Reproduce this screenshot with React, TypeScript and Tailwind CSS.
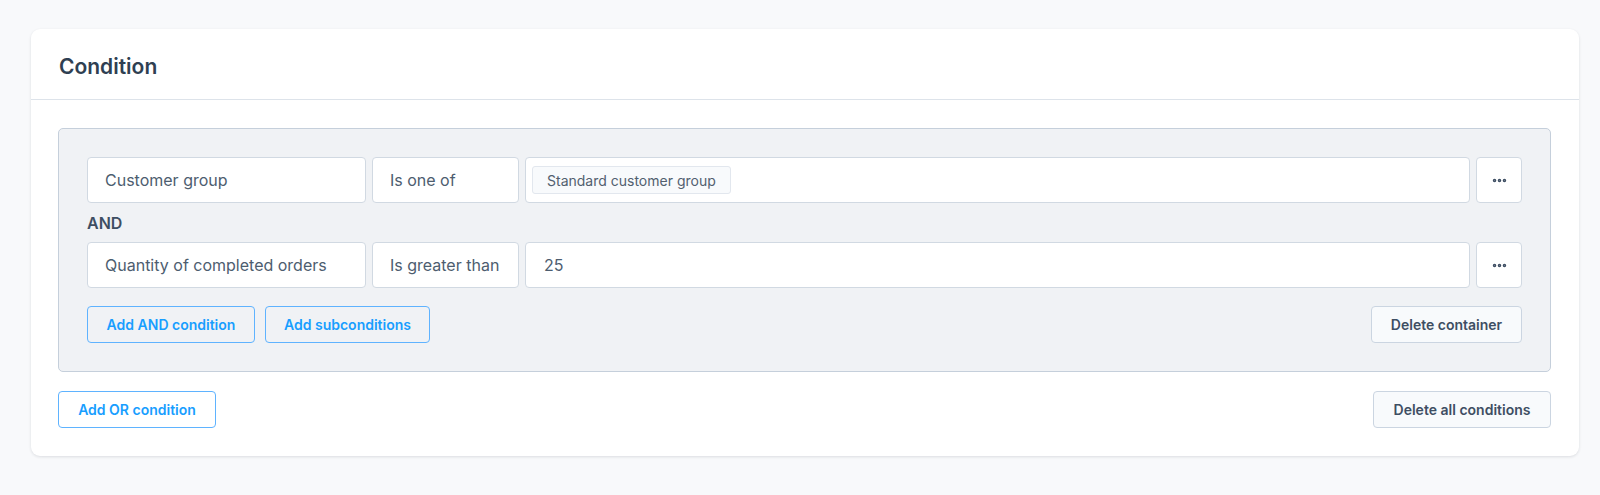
import { MoreHorizontal } from 'lucide-react'

const font = { fontFamily: 'Inter, "Noto Sans", sans-serif' }

function Field({ children, className = '' }: { children: React.ReactNode; className?: string }) {
  return (
    <div className={`h-[46px] bg-white border border-[#d1d9e2] rounded-[4px] flex items-center px-[17px] text-[16px] text-[#4d5d6f] ${className}`}>
      {children}
    </div>
  )
}

function Row({ field, op, children }: { field: string; op: string; children: React.ReactNode }) {
  return (
    <div className="flex gap-[6px]">
      <Field className="w-[279px] shrink-0">{field}</Field>
      <Field className="w-[147px] shrink-0">{op}</Field>
      <Field className="flex-1 !px-[6px]">{children}</Field>
      <button className="w-[46px] h-[46px] shrink-0 bg-white border border-[#d1d9e2] rounded-[4px] flex items-center justify-center text-[#3e4e63]">
        <MoreHorizontal size={17} strokeWidth={3} />
      </button>
    </div>
  )
}

export default function App() {
  return (
    <div className="h-[495px] overflow-hidden bg-[#f8f9fb] pt-[29px] pl-[31px]" style={font}>
      <div className="w-[1548px] bg-white rounded-[9px] shadow-[0_1px_3px_rgba(15,23,42,0.12)]">
        <div className="h-[71px] flex items-center px-[28px] pt-[5px] border-b border-[#dde3ea]">
          <h2 className="text-[21px] font-semibold text-[#2f3f52]">Condition</h2>
        </div>
        <div className="pl-[27px] pr-[28px] pt-[28px] pb-[28px]">
          <div className="bg-[#f0f2f5] border border-[#c5cfdb] rounded-[5px] p-[28px]">
            <Row field="Customer group" op="Is one of">
              <span className="h-[28px] px-[14px] flex items-center bg-[#f8fafc] border border-[#e2e7ee] rounded-[3px] text-[14px] text-[#52606f]">
                Standard customer group
              </span>
            </Row>
            <div className="h-[39px] flex items-center text-[16px] font-semibold text-[#3e4e63]">AND</div>
            <Row field="Quantity of completed orders" op="Is greater than">
              <span className="pl-[12px]">25</span>
            </Row>
            <div className="flex items-center gap-[10px] mt-[18px]">
              <button className="h-[37px] w-[168px] border border-[#5fb3ff] rounded-[4px] text-[14px] font-semibold text-[#189eff]">
                Add AND condition
              </button>
              <button className="h-[37px] w-[165px] border border-[#5fb3ff] rounded-[4px] text-[14px] font-semibold text-[#189eff]">
                Add subconditions
              </button>
              <button className="ml-auto h-[37px] w-[151px] bg-[#f8fafc] border border-[#cbd5e1] rounded-[4px] text-[14px] font-semibold text-[#3e4e63]">
                Delete container
              </button>
            </div>
          </div>
          <div className="flex items-center mt-[19px]">
            <button className="h-[37px] w-[158px] bg-white border border-[#5fb3ff] rounded-[4px] text-[14px] font-semibold text-[#189eff]">
              Add OR condition
            </button>
            <button className="ml-auto h-[37px] w-[178px] bg-[#f8fafc] border border-[#cbd5e1] rounded-[4px] text-[14px] font-semibold text-[#3e4e63]">
              Delete all conditions
            </button>
          </div>
        </div>
      </div>
    </div>
  )
}
